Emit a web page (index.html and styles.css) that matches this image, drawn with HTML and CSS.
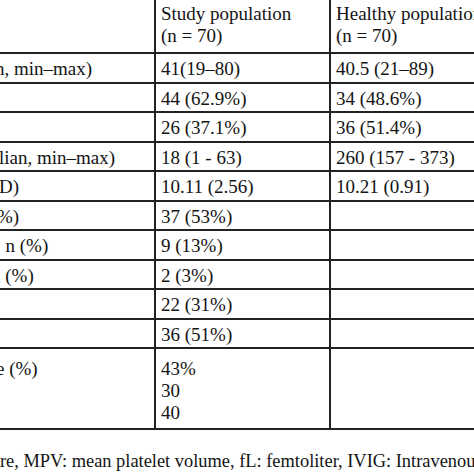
FILE: index.html
```html
<!DOCTYPE html>
<html>
<head>
<meta charset="utf-8">
<link rel="stylesheet" href="styles.css">
</head>
<body>
<div class="page">
  <table class="data">
    <colgroup>
      <col class="c1">
      <col class="c2">
      <col class="c3">
    </colgroup>
    <thead>
      <tr>
        <th></th>
        <th>Study population<br>(n = 70)</th>
        <th>Healthy population<br>(n = 70)</th>
      </tr>
    </thead>
    <tbody>
      <tr><td><span class="frag f1">n, min–max)</span></td><td>41(19–80)</td><td>40.5 (21–89)</td></tr>
      <tr><td></td><td>44 (62.9%)</td><td>34 (48.6%)</td></tr>
      <tr><td></td><td>26 (37.1%)</td><td>36 (51.4%)</td></tr>
      <tr><td><span class="frag f4">lian, min–max)</span></td><td>18 (1 - 63)</td><td>260 (157 - 373)</td></tr>
      <tr><td><span class="frag f5">D)</span></td><td>10.11 (2.56)</td><td>10.21 (0.91)</td></tr>
      <tr><td><span class="frag f6">%)</span></td><td>37 (53%)</td><td></td></tr>
      <tr><td><span class="frag f7">, n (%)</span></td><td>9 (13%)</td><td></td></tr>
      <tr><td><span class="frag f8">n (%)</span></td><td>2 (3%)</td><td></td></tr>
      <tr><td></td><td>22 (31%)</td><td></td></tr>
      <tr><td></td><td>36 (51%)</td><td></td></tr>
      <tr class="tall"><td><span class="frag f11">e (%)</span></td><td>43%<br>30<br>40</td><td></td></tr>
    </tbody>
  </table>
  <p class="note">re, MPV: mean platelet volume, fL: femtoliter, IVIG: Intravenous immunoglobulin</p>
</div>
</body>
</html>
```
FILE: styles.css
```css
html, body {
  margin: 0;
  padding: 0;
  background: #ffffff;
}
body {
  width: 474px;
  height: 474px;
  overflow: hidden;
  font-family: "Liberation Serif", "Times New Roman", serif;
  font-size: 19px;
  color: #141414;
}
.page {
  width: 474px;
  overflow: hidden;
}
.data {
  border-collapse: collapse;
  table-layout: fixed;
  width: 650px;
  margin-top: -3px;
}
.c1 { width: 155px; }
.c2 { width: 175px; }
.c3 { width: 320px; }
.data th,
.data td {
  border: 2px solid #222222;
  text-align: left;
  font-weight: normal;
  line-height: 22px;
  padding: 4px 6px 1.5px 5px;
  white-space: nowrap;
  overflow: hidden;
  vertical-align: top;
}
.data th {
  padding: 4px 6px 5px 5px;
}
.data th:first-child,
.data td:first-child {
  border-left: none;
  padding-left: 0;
}
.data tr.tall td {
  padding-top: 9px;
  padding-bottom: 4px;
}
.frag {
  display: inline-block;
}
.f1 { margin-left: -5px; }
.f4 { margin-left: -1px; }
.f5 { margin-left: -1px; }
.f6 { margin-left: -3px; }
.f7 { margin-left: -4px; }
.f8 { margin-left: -9px; }
.f11 { margin-left: -4px; }
.note {
  margin: 20px 0 0 0;
  font-size: 18.4px;
  line-height: 22px;
  white-space: nowrap;
}
```
